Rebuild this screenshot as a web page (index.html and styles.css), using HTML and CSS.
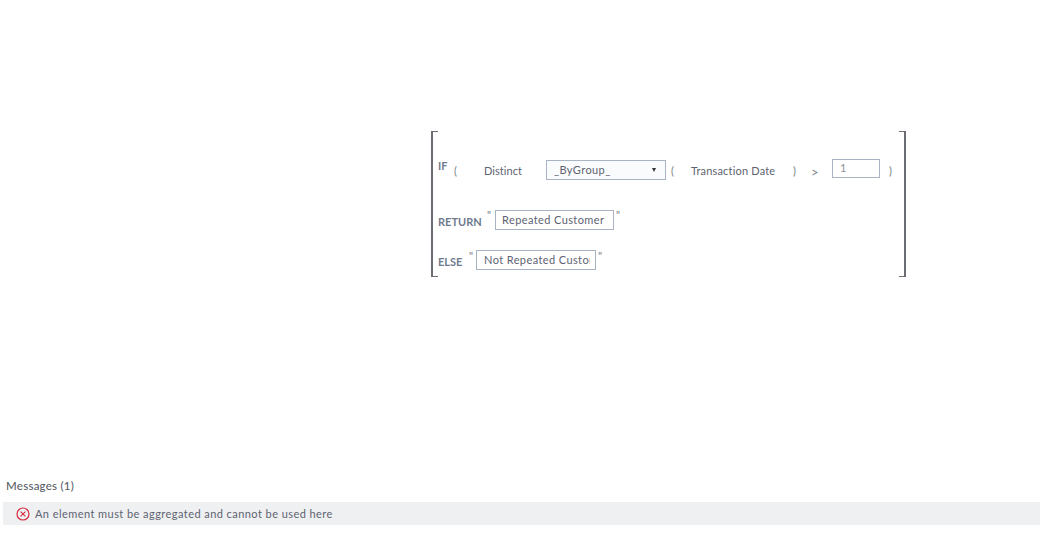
FILE: index.html
```html
<!DOCTYPE html>
<html lang="en">
<head>
<meta charset="utf-8">
<title>Calculation editor</title>
<link rel="stylesheet" href="styles.css">
</head>
<body>
<main class="page">
  <section class="editor">
    <div class="formula">
      <div class="row row-if">
        <span class="kw kw-if">IF</span>
        <span class="sym sym-open">(</span>
        <span class="txt txt-distinct">Distinct</span>
        <span class="select"><span class="select-value">_ByGroup_</span><i class="caret"></i></span>
        <span class="sym sym-open2">(</span>
        <span class="txt txt-date">Transaction Date</span>
        <span class="sym sym-close">)</span>
        <span class="sym sym-gt">&gt;</span>
        <span class="field field-num">1</span>
        <span class="sym sym-close2">)</span>
      </div>
      <div class="row row-return">
        <span class="kw kw-return">RETURN</span>
        <span class="quote quote-a">"</span>
        <span class="field field-return">Repeated Customer</span>
        <span class="quote">"</span>
      </div>
      <div class="row row-else">
        <span class="kw kw-else">ELSE</span>
        <span class="quote quote-b">"</span>
        <span class="field field-else"><span class="clip">Not Repeated Customer</span></span>
        <span class="quote">"</span>
      </div>
    </div>
  </section>
  <section class="messages">
    <h2 class="messages-title">Messages (1)</h2>
    <div class="message">
      <svg class="err" viewBox="0 0 14 14" width="14" height="14" aria-hidden="true">
        <circle cx="7" cy="7" r="6" fill="none" stroke="#d8283c" stroke-width="1.2"/>
        <path d="M4.6 4.6l4.8 4.8M9.4 4.6l-4.8 4.8" fill="none" stroke="#d8283c" stroke-width="1.1"/>
      </svg>
      <span class="message-text">An element must be aggregated and cannot be used here</span>
    </div>
  </section>
</main>
</body>
</html>
```
FILE: styles.css
```css
* { box-sizing: border-box; }
html, body { margin: 0; background: #fff; }
body { font-family: "Lato", "Open Sans", sans-serif; font-size: 11px; color: #5d6370; }
.page { width: 1040px; height: 555px; padding-top: 131px; overflow: hidden; }
.editor { padding-left: 431px; }
.formula {
  position: relative; width: 475px; height: 146px;
  display: flex; flex-direction: column; padding-left: 7px;
}
.formula::before, .formula::after {
  content: ""; position: absolute; top: 0; bottom: 0; width: 5px;
  border: solid #6a6d73; border-width: 1px 0;
}
.formula::before { left: 0; border-left-width: 2px; }
.formula::after { right: 0; border-right-width: 2px; }
.row { display: flex; align-items: flex-start; letter-spacing: .3px; }
.row-if { height: 78px; padding-top: 28px; }
.row-return { height: 40px; }
.row-else { height: 28px; }
.kw { font-weight: 700; color: #707a8e; font-size: 11px; letter-spacing: 0; line-height: 14px; }
.kw-if { width: 16px; }
.sym { line-height: 14px; margin-top: 5px; color: #7a7f8a; }
.sym-open { width: 30px; }
.txt { line-height: 14px; margin-top: 5px; }
.txt-distinct { width: 62px; letter-spacing: .05px; }
.select {
  width: 120px; height: 20px; margin-top: 1px; padding: 0 9px 0 7px;
  display: flex; align-items: center; justify-content: space-between;
  border: 1px solid #a8b3c4; background: #fafbfc;
}
.select-value { letter-spacing: .4px; margin-top: -1px; }
.caret { width: 0; height: 0; border: 2.5px solid transparent; border-top: 4px solid #333; border-bottom: 0; }
.sym-open2 { margin-left: 5px; width: 20px; }
.txt-date { width: 102px; letter-spacing: .18px; }
.sym-close { width: 18px; }
.sym-gt { width: 21px; margin-top: 6px; font-size: 13px; }
.field { display: block; height: 20px; border: 1px solid #a8b3c4; line-height: 18px; background: #fff; }
.field-num { width: 48px; height: 19px; padding-left: 7px; line-height: 15px; color: #8a8f99; }
.sym-close2 { margin-left: 9px; }
.kw-return { width: 49px; margin-top: 6px; }
.row-return .field { margin-top: 1px; }
.quote-a { width: 8px; }
.field-return { width: 119px; padding-left: 6px; letter-spacing: .4px; }
.quote { line-height: 12px; margin-left: 2px; color: #7a7f8a; }
.quote-a { margin-left: 0; }
.kw-else { width: 30px; margin-top: 6px; }
.row-else .field, .row-else .quote { margin-top: 1px; }
.quote-b { width: 7px; margin-left: 1px; }
.field-else { width: 120px; padding-left: 7px; letter-spacing: .4px; }
.clip { display: block; width: 106px; overflow: hidden; white-space: nowrap; }
.messages { margin-top: 202px; }
.messages-title { margin: 0 0 9px 6px; font-size: 11.5px; font-weight: 500; line-height: 14px; color: #5a5f69; letter-spacing: .25px; }
.message {
  margin-left: 3px; height: 23px; background: #eff0f2;
  display: flex; align-items: center; gap: 5px; padding-left: 13px;
  letter-spacing: .44px;
}
.message-text { margin-top: -1px; }
```
